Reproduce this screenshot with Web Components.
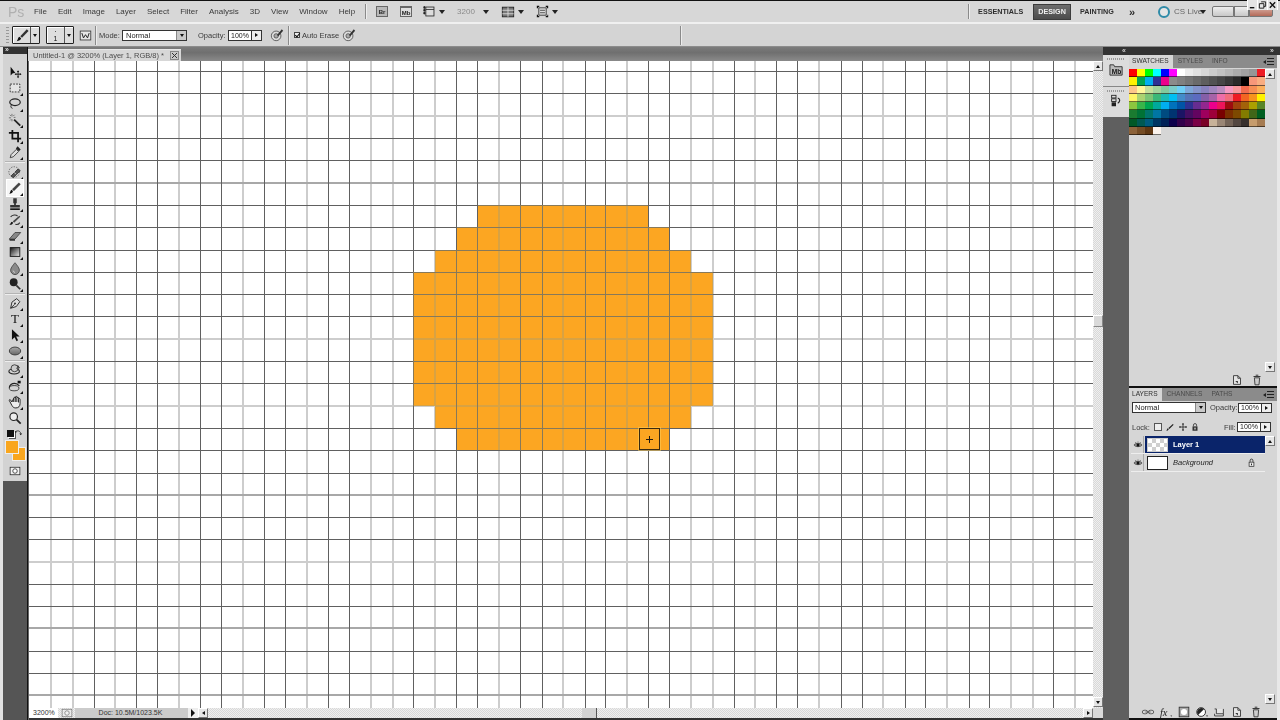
<!DOCTYPE html>
<html>
<head>
<meta charset="utf-8">
<title>Photoshop</title>
<style>
    html, body { margin: 0; height: 100%; overflow: hidden; background: #d6d6d6; }
    body { font: 8px "Liberation Sans", Arial, sans-serif; color: #333; }
    ps-app { width: 1280px; height: 720px; }
</style>
</head>
<body>
<ps-app>
    <ps-menubar></ps-menubar>
    <ps-options></ps-options>
    <ps-workspace>
        <ps-toolbox></ps-toolbox>
        <ps-document></ps-document>
        <ps-side>
            <ps-dock></ps-dock>
            <ps-panels>
                <ps-panel tabs="SWATCHES,STYLES,INFO" style="height:333px">
                    <ps-swatches></ps-swatches>
                    <ps-icon slot="footer" name="newgroup" style="margin-left:101px"></ps-icon>
                    <ps-icon slot="footer" name="trash" style="margin-left:6px"></ps-icon>
                </ps-panel>
                <ps-panel tabs="LAYERS,CHANNELS,PATHS" style="flex:1">
                    <ps-layers></ps-layers>
                    <ps-icon slot="footer" name="link" style="margin-left:12px"></ps-icon>
                    <ps-icon slot="footer" name="fx" style="margin-left:4px"></ps-icon>
                    <ps-icon slot="footer" name="mask" style="margin-left:4px"></ps-icon>
                    <ps-icon slot="footer" name="adjust" style="margin-left:4px"></ps-icon>
                    <ps-icon slot="footer" name="folder" style="margin-left:3px"></ps-icon>
                    <ps-icon slot="footer" name="newgroup" style="margin-left:4px"></ps-icon>
                    <ps-icon slot="footer" name="trash" style="margin-left:5px"></ps-icon>
                </ps-panel>
            </ps-panels>
        </ps-side>
    </ps-workspace>
</ps-app>

<script>
const ICONS = {
    move: '<path d="M3 2v10l2.5-2.5L8.5 9z" fill="#111"/><path d="M11.5 7v7M8.5 10.5h6" stroke="#111" fill="none"/><path d="M10.2 8l1.3-2 1.3 2zM10.2 13l1.3 2 1.3-2zM9.5 9.2l-2 1.3 2 1.3zM13.5 9.2l2 1.3-2 1.3z" fill="#111"/>',
    marquee: '<rect x="2.5" y="3.5" width="11" height="9" fill="#e4e4e4" stroke="#222" stroke-dasharray="2 1.4"/>',
    lasso: '<ellipse cx="8" cy="6" rx="6" ry="3.8" fill="none" stroke="#222" stroke-width="1.4"/><path d="M4 9c-1.4 1.5-.8 3.6 1.2 4" fill="none" stroke="#222"/>',
    wand: '<path d="M14 14.5L7 7.5" stroke="#222" stroke-width="2"/><path d="M4.5 1v3M4.5 7v2.5M1 5.5h2.5M6.5 5h2M7.5 2L6 3.5M2 2l1.3 1.3M2.3 8.5L3.5 7.3" stroke="#666"/>',
    crop: '<path d="M5 1v10h10M1 4.5h10.5V15" fill="none" stroke="#111" stroke-width="2"/>',
    eyedropper: '<path d="M2.5 14.5l1-3.5 6-6 2.5 2.5-6 6z" fill="#ddd" stroke="#333"/><path d="M9 4l2-2.5 3.5 3.5-2 2z" fill="#222"/>',
    healing: '<circle cx="7" cy="8" r="6" fill="none" stroke="#555" stroke-dasharray="1.5 1.5"/><path d="M3.5 12.5l8-8 2.5 2-8 8z" fill="#555" stroke="#333"/><path d="M7 8.5l2.3 2" stroke="#ccc"/>',
    brush: '<path d="M1.5 14.5c2.5 0 3.8-1 4.2-3L4 10c-1.5.7-1.2 3.3-2.5 4.5z" fill="#111"/><path d="M5 9.5L12.3 2.2l1.8 1.6L6.8 11z" fill="#444" stroke="#222" stroke-width=".6"/>',
    stamp: '<path d="M6 1.5h4V7H9v2h4.5v3h-11V9H7V7H6z" fill="#333"/><path d="M2.5 13h11v1.8h-11z" fill="#111"/>',
    history: '<path d="M1.5 13.5c2.5.3 4-.8 4.4-2.4L4.5 10c-1.6.7-1.4 2.5-3 3.5z" fill="#111"/><path d="M5.5 9.5L13 3l1 1.3L7 11z" fill="#444"/><path d="M3 4.5c2-2.5 6-3 8-1M8.5 13c2 .5 4-.3 5-2" fill="none" stroke="#333" stroke-width="1.2"/>',
    eraser: '<path d="M1.5 11.5L8 4h6.5L8 11.5z" fill="#888" stroke="#444"/><path d="M1.5 11.5H8v1.8H2z" fill="#333"/>',
    gradient: '<defs><linearGradient id="g" x1="0" x2="1" y1="0" y2="1"><stop offset="0" stop-color="#111"/><stop offset="1" stop-color="#eee"/></linearGradient></defs><rect x="2.5" y="3" width="11" height="10" fill="url(#g)" stroke="#111"/>',
    drop: '<path d="M8 2s-5 5.5-5 8.5a5 5 0 0 0 10 0C13 7.5 8 2 8 2z" fill="#8a8a8a" stroke="#444"/><path d="M6 11c0 1 .8 1.8 2 2" stroke="#ddd" fill="none"/>',
    burn: '<circle cx="6.5" cy="6" r="4.5" fill="#222"/><path d="M9.5 9.5l4.5 4.5" stroke="#333" stroke-width="2"/>',
    pen: '<path d="M3 14l1.5-7L10 3l3.5 3.5L9.5 12z" fill="#ddd" stroke="#222"/><path d="M3 14l4.5-4.5" stroke="#222"/><circle cx="8" cy="8.5" r="1" fill="#222"/>',
    type: '<text x="8" y="13" text-anchor="middle" font-family="Liberation Serif" font-size="15" fill="#111">T</text>',
    pointer: '<path d="M4.5 1.5v12l3-3 2.3 4.5 1.7-1-2.200-4.200h4z" fill="#111"/>',
    ellipse: '<defs><linearGradient id="e" x1="0" x2="0" y1="0" y2="1"><stop offset="0" stop-color="#aaa"/><stop offset="1" stop-color="#666"/></linearGradient></defs><ellipse cx="8" cy="8" rx="6.5" ry="4.5" fill="url(#e)" stroke="#333"/>',
    orbit: '<ellipse cx="7" cy="9.5" rx="6" ry="3" fill="none" stroke="#222" stroke-width="1.2"/><circle cx="7.5" cy="6" r="4" fill="#ccc" stroke="#333"/><path d="M11 2.5l2 3-3.5.5" fill="none" stroke="#222"/>',
    orbit2: '<path d="M1.5 10c0-3 3-5 6-5 2.5 0 4 1 5.5 3" fill="none" stroke="#222" stroke-width="1.4"/><ellipse cx="7" cy="10.5" rx="5.5" ry="3" fill="none" stroke="#333"/><path d="M11 2h3.5v3H11z" fill="#111"/>',
    hand: '<path d="M4.5 8L2.800 5.500c-.8-.8-1.800.2-1.200 1L4.500 12c1 2 2.500 2.800 4.500 2.800 3 0 4.800-2 4.800-5V5c0-1.300-1.600-1.300-1.700 0V3.500c0-1.300-1.800-1.300-1.800 0V2.500c0-1.300-1.800-1.300-1.800 0v1c0-1.200-1.800-1.200-1.800 0z" fill="#eee" stroke="#111"/><path d="M6.500 4v4M8.300 3v5M10.100 3.500V8M12 5v3.500" stroke="#111" fill="none"/>',
    zoom: '<circle cx="6.5" cy="6.5" r="4.3" fill="#eee" stroke="#222" stroke-width="1.3"/><path d="M9.800 9.800l4.700 4.700" stroke="#222" stroke-width="2"/>',
    pencil: '<path d="M2 15c2.800 0 4.500-1.200 5-3.200L5 10c-2 .8-1.500 3.500-3 5z" fill="#111"/><path d="M6 9.500L13.500 1.500l2 2L8 11z" fill="#333"/>',
    brushpanel: '<rect x="1.5" y="2.5" width="13" height="11" fill="#e6e6e6" stroke="#333"/><path d="M3.5 5l2 6 2.500-4 2.500 4 2-6" fill="none" stroke="#222" stroke-width="1.2"/>',
    airbrush: '<circle cx="7" cy="9" r="5.5" fill="#ddd" stroke="#555"/><circle cx="7" cy="9" r="2.5" fill="#aaa" stroke="#555"/><path d="M8 8l5.500-6.500 1.500 1.500L9.500 9.500z" fill="#333"/>',
    layout: '<rect x="3.5" y="2.5" width="10" height="11" fill="#ddd" stroke="#222"/><path d="M1 2h1.500v2H1zM1 5.500h1.500v2H1zM1 9h1.500v2H1zM3.500 5.500h10" stroke="#222" fill="#222"/>',
    arrange: '<rect x="1.5" y="2.5" width="13" height="11" fill="#777" stroke="#222"/><path d="M8 2.500v11M1.500 6h13M1.500 10h13" stroke="#ddd"/>',
    screen: '<rect x="3.5" y="3.5" width="9" height="9" fill="#ddd" stroke="#222"/><path d="M1 1h3v1.500H2.500V4H1zM12 1h3v3h-1.500V2.500H12zM1 12h1.500v1.500H4V15H1zM14 12h1v3h-3v-1.500h2z" fill="#111"/><path d="M5 6.500h6M5 9.500h6" stroke="#333"/>',
    newgroup: '<path d="M4 3h5l3 3v7H4z" fill="#e4e4e4" stroke="#333"/><path d="M9 3v3h3" fill="none" stroke="#333"/><path d="M6 9h3v3" fill="#333"/>',
    trash: '<path d="M5 5.500h6l-.7 8H5.700z" fill="#ccc" stroke="#333"/><path d="M4 4h8M6.500 2.500h3" stroke="#222"/>',
    link: '<rect x="1.5" y="6" width="6" height="4" rx="2" fill="none" stroke="#555"/><rect x="8.5" y="6" width="6" height="4" rx="2" fill="none" stroke="#555"/><path d="M5 8h6" stroke="#555"/>',
    fx: '<text x="1" y="12" font-family="Liberation Serif" font-style="italic" font-size="12" fill="#222">fx</text><path d="M13 12l2 0-1 1.500z" fill="#222"/>',
    mask: '<rect x="2.5" y="2.5" width="11" height="11" fill="#aaa" stroke="#333"/><circle cx="8" cy="8" r="3.5" fill="#fff"/>',
    adjust: '<circle cx="7" cy="8" r="5" fill="#fff" stroke="#222"/><path d="M3.500 11.500a5 5 0 0 1 7-7z" fill="#222"/><path d="M12.500 12l2.500 0-1.200 1.500z" fill="#222"/>',
    folder: '<path d="M3 4.500h2v5.500h8V4.500M3 10v2.500h10V10" fill="#e4e4e4" stroke="#333"/>',
    lock: '<rect x="4" y="7" width="8" height="7" fill="#333"/><path d="M5.500 7V5a2.500 2.500 0 0 1 5 0v2" fill="none" stroke="#333" stroke-width="1.3"/><rect x="7" y="9" width="2" height="3" fill="#ddd"/>',
    lockwhite: '<rect x="4.5" y="7.5" width="7" height="6" fill="#eee" stroke="#222"/><path d="M6 7V5a2 2 0 0 1 4 0v2" fill="none" stroke="#222" stroke-width="1.2"/><rect x="7.3" y="9.5" width="1.4" height="2.5" fill="#222"/>',
    lockpixels: '<path d="M2 14c2.500 0 3.500-1 4-2.800L4.500 10C3 10.800 3.300 13 2 14zM5.500 9.500L12.500 3l1.300 1.300L7 11z" fill="#222"/>',
    cross: '<path d="M8 2v12M2 8h12" stroke="#222" stroke-width="1.3"/><path d="M6.300 4L8 1.500 9.700 4zM6.300 12L8 14.500 9.700 12zM4 6.300L1.500 8 4 9.700zM12 6.300L14.500 8 12 9.700z" fill="#222"/>',
    eye: '<path d="M1.500 8c2-3.500 11-3.500 13 0-2 3.500-11 3.500-13 0z" fill="#999" stroke="#222"/><circle cx="8" cy="8" r="2.4" fill="#111"/><path d="M4 3.500l1 1.500M8 2.500V4M12 3.500l-1 1.500" stroke="#222"/>',
    swap: '<path d="M3 5c3-3 8-2 9 3" fill="none" stroke="#111" stroke-width="1.3"/><path d="M1 5l3-2v4zM9.500 8h5L12 11z" fill="#111"/>',
    quickmask: '<rect x="1.5" y="3" width="13" height="10" fill="#f2f2f2" stroke="#222"/><circle cx="8" cy="8" r="3" fill="#fff" stroke="#222"/>',
    mb: '<path d="M1 3h4l1 2h8v9H1z" fill="#bbb" stroke="#333"/><text x="8" y="12.5" text-anchor="middle" font-family="Liberation Sans" font-weight="700" font-size="7" fill="#111">Mb</text>',
    actions: '<rect x="3" y="1.5" width="5" height="3" fill="none" stroke="#222"/><rect x="3" y="5.5" width="5" height="3" fill="none" stroke="#222"/><rect x="3" y="9.5" width="5" height="4.5" fill="#222"/><path d="M10 4.500c3 .8 3 4.500 0 6" fill="none" stroke="#222" stroke-width="1.3"/>'
};

// small helper so the plain elements don't each repeat the same constructor
function define(name, css, html) {
    customElements.define(name, class extends HTMLElement {
        constructor() {
            super();
            this.attachShadow({ mode: 'open' }).innerHTML = `<style>${css}</style>${html}`;
        }
    });
}

class PsIcon extends HTMLElement {
    constructor() {
        super();
        this.attachShadow({ mode: 'open' });
    }

    connectedCallback() {
        const size = this.getAttribute('size') || 14;
        this.shadowRoot.innerHTML = `
        <style>
            :host { display: inline-flex; flex: none; width: ${size}px; height: ${size}px; }
            svg { width: 100%; height: 100%; display: block; }
        </style>
        <svg viewBox="0 0 16 16">${ICONS[this.getAttribute('name')] || ''}</svg>`;
    }
}
customElements.define('ps-icon', PsIcon);

class PsTool extends HTMLElement {
    constructor() {
        super();
        this.attachShadow({ mode: 'open' });
    }

    connectedCallback() {
        this.shadowRoot.innerHTML = `
        <style>
            :host { display: flex; justify-content: center; align-items: center; height: 16px; flex: none; }
            .cell { width: 16px; height: 16px; display: flex; align-items: center; justify-content: center; position: relative; }
            :host([selected]) .cell { background: #f6f6f6; box-shadow: 0 0 0 1px #fff; }
            :host(:not([plain])) .cell::after {
                content: ""; position: absolute; right: 0; bottom: 0;
                border-right: 3px solid #111; border-top: 3px solid transparent;
            }
        </style>
        <div class="cell"><ps-icon name="${this.getAttribute('name')}" size="14"></ps-icon></div>`;
    }
}
customElements.define('ps-tool', PsTool);

define('ps-app', `
    :host { display: flex; flex-direction: column; overflow: hidden; position: relative; }
`, `<slot></slot>`);

define('ps-workspace', `
    :host { display: flex; flex: 1; min-height: 0; }
`, `<slot></slot>`);

define('ps-menubar', `
    :host {
        display: flex; align-items: center; height: 24px; flex: none; box-sizing: border-box; position: relative;
        background: #d7d7d7; border-top: 1px solid #efefef; border-bottom: 2px solid;
        border-image: linear-gradient(#111 50%, #f0f0f0 50%) 1; font-size: 8px; color: #3a3a3a; filter: blur(.3px);
    }
    .logo { font: 400 14px "Liberation Sans", sans-serif; color: #b0b0b0; margin-left: 8px; width: 26px; flex: none; }
    nav { display: flex; gap: 11px; flex: none; }
    .sep { width: 1px; height: 15px; background: #8a8a8a; box-shadow: 1px 0 #eee; flex: none; }
    .bridge { font: 700 6px "Liberation Sans", sans-serif; width: 12px; height: 11px; line-height: 11px; text-align: center;
        background: #b8b8b8; border: 1px solid #666; box-sizing: border-box; flex: none; margin-left: 10px; color: #222; }
    .mini { margin-left: 12px; background: #ddd; border-top: 2px solid #666; }
    .dd { width: 0; height: 0; border: 3px solid transparent; border-top: 4px solid #222; border-bottom: 0; flex: none; margin-left: 3px; }
    .zoom { color: #8b8b8b; margin-left: 12px; width: 22px; font-size: 8px; flex: none; }
    .ws { font: 700 7.2px "Liberation Sans", sans-serif; color: #2d2d2d; flex: none; white-space: nowrap; }
    .ws.on { background: linear-gradient(#6d6d6d, #4c4c4c); border: 1px solid #3c3c3c; color: #f0f0f0; height: 16px; line-height: 14px;
        width: 38px; text-align: center; box-sizing: border-box; margin: 0 9px; }
    .live { width: 8px; height: 8px; border: 2px solid #2f8ba8; border-radius: 50%; background: #e5e5e5; flex: none; margin-left: 20px; }
    .livetext { color: #666; margin-left: 4px; font-size: 8px; flex: none; width: 25px; white-space: nowrap; }
    .winbox { display: flex; margin-left: 6px; height: 11px; flex: none; }
    .winbox i { display: block; box-sizing: border-box; border: 1px solid #777; background: linear-gradient(#eee, #c8c8c8); }
    .winbox i:nth-child(1) { width: 22px; border-radius: 2px 0 0 2px; }
    .winbox i:nth-child(2) { width: 15px; }
    .winbox i:nth-child(3) { width: 24px; background: linear-gradient(#d9b2a8, #b56a58); border-radius: 0 2px 2px 0; }
    .chrome { position: absolute; left: 1247px; top: -1px; display: flex; gap: 1px; height: 10px; background: #fff; padding: 0 1px; }
    .chrome svg { width: 9px; height: 10px; display: block; background: #e4e4e4; }
`, `
    <span class="logo">Ps</span>
    <nav>
        <span>File</span><span>Edit</span><span>Image</span><span>Layer</span><span>Select</span><span>Filter</span>
        <span>Analysis</span><span>3D</span><span>View</span><span>Window</span><span>Help</span>
    </nav>
    <span class="sep" style="margin-left:10px"></span>
    <span class="bridge">Br</span>
    <span class="bridge mini">Mb</span>
    <ps-icon name="layout" size="13" style="margin-left:11px"></ps-icon><span class="dd"></span>
    <span class="zoom">3200</span><span class="dd" style="margin-left:4px"></span>
    <ps-icon name="arrange" size="14" style="margin-left:12px"></ps-icon><span class="dd"></span>
    <ps-icon name="screen" size="13" style="margin-left:12px"></ps-icon><span class="dd"></span>
    <span class="sep" style="margin-left:410px"></span>
    <span class="ws" style="margin-left:9px;width:46px">ESSENTIALS</span>
    <span class="ws on">DESIGN</span>
    <span class="ws" style="width:37px">PAINTING</span>
    <span class="ws" style="margin-left:12px;font-size:11px;letter-spacing:-1px;width:9px">»</span>
    <span class="live"></span>
    <span class="livetext">CS Live</span><span class="dd" style="margin-left:1px"></span>
    <span class="winbox"><i></i><i></i><i></i></span>
    <div class="chrome">
        <svg viewBox="0 0 10 10"><path d="M2 8h5" stroke="#111" stroke-width="1.5"/></svg>
        <svg viewBox="0 0 10 10"><path d="M3.500 1.500h5v5h-2M1.500 3.500h5v5h-5z" fill="none" stroke="#111"/></svg>
        <svg viewBox="0 0 10 10"><path d="M2 2l6 6M8 2l-6 6" stroke="#111" stroke-width="1.5"/></svg>
    </div>
`);

define('ps-options', `
    :host {
        display: flex; align-items: center; height: 23px; flex: none; box-sizing: border-box;
        background: #d4d4d4; border-bottom: 1px solid #8c8c8c; font-size: 7.5px; color: #3a3a3a; filter: blur(.3px);
    }
    .grip { width: 3px; height: 16px; margin-left: 6px; flex: none; background: repeating-linear-gradient(#999 0 1px, transparent 1px 3px); }
    .preset { display: flex; align-items: center; height: 18px; box-sizing: border-box; border: 1px solid #222; border-radius: 1px;
        background: #dedede; flex: none; box-shadow: inset 1px 1px #fff; }
    .caret { width: 0; height: 0; border: 2.5px solid transparent; border-top: 3px solid #111; border-bottom: 0; }
    .cell { display: flex; width: 9px; height: 100%; align-items: center; justify-content: center; border-left: 1px solid #555; box-sizing: border-box; }
    .tip { flex: 1; text-align: center; font-size: 7px; line-height: 7px; color: #111; }
    .sep { width: 1px; height: 19px; background: #8a8a8a; box-shadow: 1px 0 #ececec; flex: none; }
    .field { background: #fff; border: 1px solid #333; box-sizing: border-box; height: 11px; line-height: 9px; padding-left: 2px; flex: none; color: #222; }
    .sel { display: flex; justify-content: space-between; width: 65px; padding-left: 3px; font-size: 7.5px; }
    .sel b { display: flex; align-items: center; justify-content: center; width: 9px; background: #c9c9c9; border-left: 1px solid #888; }
    .arrow { width: 10px; height: 11px; box-sizing: border-box; border: 1px solid #333; border-left: 0; background: #eee; display: flex; align-items: center; justify-content: center; flex: none; }
    .arrow::after { content: ""; border-left: 3px solid #111; border-top: 2px solid transparent; border-bottom: 2px solid transparent; }
    .check { width: 6px; height: 6px; border: 1px solid #444; background: #eee; box-sizing: border-box; flex: none; position: relative; }
    .check::after { content: ""; position: absolute; left: 1px; top: -1px; width: 2px; height: 4px; border: solid #111; border-width: 0 1px 1px 0; transform: rotate(40deg); }
    span { flex: none; }
`, `
    <i class="grip"></i>
    <div class="preset" style="margin-left:3px;width:28px">
        <span style="flex:1;display:flex;justify-content:center"><ps-icon name="pencil" size="14"></ps-icon></span>
        <span class="cell"><i class="caret"></i></span>
    </div>
    <div class="preset" style="margin-left:6px;width:28px">
        <span class="tip">·<br>1</span>
        <span class="cell"><i class="caret"></i></span>
    </div>
    <ps-icon name="brushpanel" size="13" style="margin-left:5px"></ps-icon>
    <span class="sep" style="margin-left:3px"></span>
    <span style="margin-left:3px;width:23px">Mode:</span>
    <div class="field sel"><span>Normal</span><b><i class="caret"></i></b></div>
    <span style="margin-left:11px;width:30px">Opacity:</span>
    <span class="field" style="width:24px;font-size:7px">100%</span><i class="arrow"></i>
    <ps-icon name="airbrush" size="14" style="margin-left:8px"></ps-icon>
    <span class="sep" style="margin-left:4px"></span>
    <i class="check" style="margin-left:5px"></i>
    <span style="margin-left:2px;width:40px">Auto Erase</span>
    <ps-icon name="airbrush" size="14"></ps-icon>
    <span class="sep" style="margin-left:324px"></span>
`);

define('ps-toolbox', `
    :host {
        display: flex; flex-direction: column; width: 28px; flex: none; box-sizing: border-box;
        border-left: 3px solid #e2e2e2; border-right: 1px solid #111; background: #555; filter: blur(.3px);
    }
    .head { height: 7px; background: #333; color: #ddd; font: 700 7px/6px "Liberation Sans", sans-serif; padding-left: 2px; letter-spacing: -1px; }
    .body { background: #d3d3d3; height: 427px; display: flex; flex-direction: column; padding-top: 10px; box-sizing: border-box; }
    .rule { height: 4px; flex: none; position: relative; }
    .rule::after { content: ""; position: absolute; left: 2px; right: 2px; top: 1px; height: 1px; background: #b4b4b4; box-shadow: 0 1px #eee; }
    .swap { display: flex; justify-content: space-between; align-items: center; padding: 0 4px; height: 15px; flex: none; }
    .defaults { width: 7px; height: 7px; background: #111; box-shadow: 1px 1px 0 #fff, 2px 2px 0 #555; }
    .colors { position: relative; height: 22px; flex: none; }
    .fg, .bg { position: absolute; width: 12px; height: 12px; background: #f9a61e; box-shadow: 0 0 0 1px #eee; }
    .fg { left: 3px; top: 0; z-index: 1; }
    .bg { left: 10px; top: 7px; }
    ps-icon.mask { margin: 2px auto 0; }
`, `
    <div class="head">»</div>
    <div class="body">
        <ps-tool name="move" plain></ps-tool>
        <ps-tool name="marquee"></ps-tool>
        <ps-tool name="lasso"></ps-tool>
        <ps-tool name="wand"></ps-tool>
        <ps-tool name="crop"></ps-tool>
        <ps-tool name="eyedropper"></ps-tool>
        <div class="rule"></div>
        <ps-tool name="healing"></ps-tool>
        <ps-tool name="brush" selected></ps-tool>
        <ps-tool name="stamp"></ps-tool>
        <ps-tool name="history"></ps-tool>
        <ps-tool name="eraser"></ps-tool>
        <ps-tool name="gradient"></ps-tool>
        <ps-tool name="drop"></ps-tool>
        <ps-tool name="burn"></ps-tool>
        <div class="rule" style="height:3px"></div>
        <ps-tool name="pen"></ps-tool>
        <ps-tool name="type"></ps-tool>
        <ps-tool name="pointer"></ps-tool>
        <ps-tool name="ellipse"></ps-tool>
        <div class="rule" style="height:3px"></div>
        <ps-tool name="orbit"></ps-tool>
        <ps-tool name="orbit2"></ps-tool>
        <ps-tool name="hand"></ps-tool>
        <ps-tool name="zoom" plain></ps-tool>
        <div class="swap"><i class="defaults"></i><ps-icon name="swap" size="9"></ps-icon></div>
        <div class="colors"><i class="bg"></i><i class="fg"></i></div>
        <ps-icon class="mask" name="quickmask" size="12"></ps-icon>
    </div>
`);

define('ps-document', `
    :host { display: flex; flex-direction: column; width: 1075px; flex: none; background: #333; box-sizing: border-box; border-left: 1px solid #666; }
    .tabs { height: 14px; flex: none; background: linear-gradient(#7c7c7c, #6f6f6f 40%, #8a8a8a); display: flex; align-items: flex-end; margin-left: -1px; }
    .tab { display: flex; align-items: center; height: 12px; width: 153px; background: #d7d7d7; color: #4b4b4b; font-size: 7.5px; padding-left: 5px; box-sizing: border-box; border-top: 1px solid #e8e8e8; filter: blur(.3px); }
    .tab span { width: 137px; white-space: nowrap; }
    .close { width: 9px; height: 9px; box-sizing: border-box; border: 1px solid #888; background: #c8c8c8; display: block; }
    .close svg { display: block; width: 100%; height: 100%; }
    .view { display: flex; flex: none; height: 647px; }
`, `
    <div class="tabs">
        <div class="tab"><span>Untitled-1 @ 3200% (Layer 1, RGB/8) *</span>
            <i class="close"><svg viewBox="0 0 7 7"><path d="M1 1l5 5M6 1l-5 5" stroke="#333"/></svg></i>
        </div>
    </div>
    <div class="view">
        <ps-canvas></ps-canvas>
        <ps-vscroll top="244" thumb="12"></ps-vscroll>
    </div>
    <ps-statusbar></ps-statusbar>
`);

class PsCanvas extends HTMLElement {
    constructor() {
        super();
        const shadowRoot = this.attachShadow({ mode: 'open' });
        // grid is scaled down from 32x so the lines land unevenly, hence the explicit lists
        const vertical = {
            d: [94, 136, 157, 200, 221, 264, 285, 328, 349, 413, 456, 477, 520, 542, 585, 605, 648, 669, 734, 776, 797, 841, 862, 905, 925, 969, 989, 1053],
            l: [51, 73, 115, 179, 243, 307, 371, 393, 435, 499, 563, 627, 691, 713, 755, 819, 883, 947, 1011, 1033, 1075]
        };
        const horizontal = {
            d: [71, 93, 138, 160, 205, 227, 250, 272, 294, 316, 361, 383, 428, 450, 473, 517, 539, 584, 606, 651, 673],
            m: [183, 495, 628, 695],
            l: [116, 339, 406, 562]
        };
        const rows = [
            [205, 227, 478, 648], [227, 250, 457, 669], [250, 272, 435, 691], [272, 406, 413, 713],
            [406, 428, 435, 691], [428, 450, 457, 669]
        ];
        const rect = (x, y, w, h, fill) => `<rect x="${x}" y="${y}" width="${w}" height="${h}" fill="${fill}"/>`;
        const lines = (dark, mid, light) => [
            ...vertical.l.map(x => rect(x - 1, 61, 2, 647, light)),
            ...horizontal.l.map(y => rect(29, y - 1, 1064, 2, light)),
            ...horizontal.m.map(y => rect(29, y - 1, 1064, 2, mid)),
            ...vertical.d.map(x => rect(x, 61, 1, 647, dark)),
            ...horizontal.d.map(y => rect(29, y, 1064, 1, dark))
        ].join('');
        const orange = rows.map(([y1, y2, x1, x2]) => rect(x1, y1, x2 - x1, y2 - y1, '#fca622')).join('');
        const clip = rows.map(([y1, y2, x1, x2]) => `<rect x="${x1}" y="${y1}" width="${x2 - x1}" height="${y2 - y1}"/>`).join('');
        shadowRoot.innerHTML = `
        <style>
            :host { display: block; width: 1064px; height: 647px; flex: none; background: #fff; }
            svg { display: block; }
        </style>
        <svg width="1064" height="647" viewBox="29 61 1064 647" shape-rendering="crispEdges">
            <defs><clipPath id="paint">${clip}</clipPath></defs>
            ${lines('#606060', '#a8a8a8', '#cdcdcd')}
            ${orange}
            <g clip-path="url(#paint)">${lines('#87795a', '#c0a060', '#d8a243')}</g>
            <rect x="639.5" y="428.5" width="20" height="21" fill="#fca622" stroke="#3a2a10"/>
            <rect x="638.5" y="427.5" width="22" height="23" fill="none" stroke="#ffd05a" stroke-opacity=".5"/>
            <path d="M649 436v7M645.500 439.500h7" stroke="#221a10"/>
        </svg>`;
    }
}
customElements.define('ps-canvas', PsCanvas);

class PsVscroll extends HTMLElement {
    constructor() {
        super();
        this.attachShadow({ mode: 'open' });
    }

    connectedCallback() {
        const top = this.getAttribute('top');
        const thumb = top ? `<i class="thumb" style="margin-top:${top}px;height:${this.getAttribute('thumb')}px"></i>` : '';
        this.shadowRoot.innerHTML = `
        <style>
            :host {
                display: flex; flex-direction: column; width: 10px; flex: none;
                background: var(--track, repeating-conic-gradient(#d8d8d8 0 25%, #efefef 0 50%) 0 0 / 2px 2px);
            }
            i { display: block; flex: none; box-sizing: border-box; }
            .btn { height: 10px; background: #e6e6e6; border: 1px solid #777; border-top-color: #fff; border-left-color: #fff; position: relative; }
            .btn::after { content: ""; position: absolute; left: 2px; top: 3px; border: 2.5px solid transparent; border-top: 0; border-bottom: 3px solid #111; }
            .down::after { border-bottom: 0; border-top: 3px solid #111; }
            .thumb { background: #d9d9d9; border: 1px solid #888; border-top-color: #fff; border-left-color: #fff; }
            .fill { flex: 1; }
        </style>
        <i class="btn"></i>${thumb}<i class="fill"></i><i class="btn down"></i><i style="height:1px"></i>`;
    }
}
customElements.define('ps-vscroll', PsVscroll);

define('ps-statusbar', `
    :host { display: flex; align-items: center; height: 10px; flex: none; box-sizing: border-box; font-size: 7px; color: #333;
        background: repeating-conic-gradient(#d8d8d8 0 25%, #efefef 0 50%) 0 0 / 2px 2px; }
    .zoom { width: 29px; height: 10px; line-height: 10px; background: #fff; padding-left: 4px; box-sizing: border-box; flex: none; font-size: 7px; }
    .info { width: 113px; height: 10px; line-height: 10px; background: #cbcbcb; text-align: center; flex: none; padding-right: 2px; box-sizing: border-box; }
    .run { width: 10px; height: 10px; flex: none; display: flex; align-items: center; justify-content: center; background: #eee; }
    .run::after { content: ""; border-left: 4px solid #111; border-top: 4px solid transparent; border-bottom: 4px solid transparent; }
    .btn { width: 10px; height: 10px; box-sizing: border-box; background: #e6e6e6; border: 1px solid #777; border-top-color: #fff; border-left-color: #fff; flex: none; display: flex; align-items: center; justify-content: center; }
    .btn::after { content: ""; border-right: 3px solid #111; border-top: 2.5px solid transparent; border-bottom: 2.5px solid transparent; }
    .btn.r::after { border-right: 0; border-left: 3px solid #111; }
    .thumb { width: 15px; height: 10px; background: #d2d2d2; box-sizing: border-box; border-right: 1px solid #555; flex: none; margin-left: 374px; }
    .fill { flex: 1; }
    .corner { width: 10px; height: 10px; background: #d9d9d9; flex: none; }
`, `
    <span class="zoom">3200%</span>
    <ps-icon name="quickmask" size="12" style="margin:0 2px 0 3px;opacity:.55"></ps-icon>
    <span class="info">Doc: 10.5M/1023.5K</span>
    <i class="run"></i>
    <i class="btn"></i>
    <i class="thumb"></i>
    <i class="fill"></i>
    <i class="btn r"></i>
    <i class="corner"></i>
`);

define('ps-side', `
    :host { display: flex; flex-wrap: wrap; align-content: flex-start; width: 177px; flex: none; background: #5f5f5f; position: relative; filter: blur(.25px); }
    .head { width: 100%; height: 8px; background: #333; display: flex; justify-content: space-between; color: #ccc; font: 700 7px/7px "Liberation Sans", sans-serif; padding: 0 7px 0 19px; box-sizing: border-box; letter-spacing: -1px; }
    .row { display: flex; width: 100%; height: 665px; }
`, `
    <div class="head"><span>«</span><span>»</span></div>
    <div class="row"><slot></slot></div>
`);

define('ps-dock', `
    :host { display: flex; flex-direction: column; width: 26px; flex: none; }
    .group { background: #dcdcdc; display: flex; flex-direction: column; align-items: center; box-sizing: border-box; height: 31px; }
    .group + .group { border-top: 1px solid #888; }
    .group::before { content: ""; width: 18px; height: 2px; margin: 3px 0 2px; background: repeating-linear-gradient(90deg, #999 0 1px, transparent 1px 2px); }
`, `
    <div class="group"><ps-icon name="mb" size="15"></ps-icon></div>
    <div class="group"><ps-icon name="actions" size="14"></ps-icon></div>
`);

define('ps-panels', `
    :host { display: flex; flex-direction: column; width: 151px; flex: none; border-right: 3px solid #e8e8e8; box-sizing: border-box; }
`, `<slot></slot>`);

class PsPanel extends HTMLElement {
    constructor() {
        super();
        this.attachShadow({ mode: 'open' });
    }

    connectedCallback() {
        const tabs = this.getAttribute('tabs').split(',')
            .map((t, i) => `<span class="${i === 0 ? 'tab on' : 'tab'}">${t}</span>`).join('');
        this.shadowRoot.innerHTML = `
        <style>
            :host { display: flex; flex-direction: column; background: #d6d6d6; box-sizing: border-box; flex: none; border-bottom: 2px solid #111; }
            .tabs { display: flex; height: 13px; flex: none; background: #8b8b8b; align-items: flex-start; position: relative; }
            .tab { color: #4a4a4a; font: 400 6.6px/12px "Liberation Sans", sans-serif; height: 12px; padding: 0 4.5px; }
            .tab.on { background: #d6d6d6; color: #2f2f2f; padding-left: 3px; height: 13px; }
            .menu { position: absolute; right: 3px; top: 3px; width: 7px; height: 7px; background: repeating-linear-gradient(#222 0 1px, transparent 1px 3px); }
            .menu::before { content: ""; position: absolute; left: -4px; top: 2px; border-right: 3px solid #222; border-top: 2px solid transparent; border-bottom: 2px solid transparent; }
            .body { flex: 1; min-height: 0; display: flex; }
            footer { display: flex; align-items: center; height: 13px; flex: none; background: #d6d6d6; }
        </style>
        <div class="tabs">${tabs}<i class="menu"></i></div>
        <div class="body"><slot></slot></div>
        <footer><slot name="footer"></slot></footer>`;
    }
}
customElements.define('ps-panel', PsPanel);

class PsSwatches extends HTMLElement {
    constructor() {
        super();
        const shadowRoot = this.attachShadow({ mode: 'open' });
        const colors = `ff0000 ffff00 00ff00 00ffff 0000ff ff00ff ffffff ebebeb e1e1e1 d7d7d7 cccccc c2c2c2 b7b7b7 acacac a1a1a1 969696 ed1c24
            fff200 00a651 00aeef 2e3192 ec008c 8b8b8b 808080 757575 6a6a6a 5e5e5e 525252 464646 383838 2a2a2a 000000 f7977a f9ad81
            fdc68a fff79a c4df9b a2d39c 82ca9d 7bcdc8 6ecff6 7ea7d8 8493ca 8882be a187be bc8dbf f49ac2 f6989d f26c4f f68e55 fbaf5c
            fff467 acd372 7cc576 3bb878 1abbb4 00bff3 438cca 5574b9 5c6bc0 855fa8 a763a8 ee6ea8 f26d7d ed1c24 f26522 f7941d fff200
            8dc63f 39b54a 00a651 00a99d 00aeef 0072bc 0054a6 2e3192 662d91 92278f ec008c ed145b 9e0b0f a0410d a36209 aba000 598527
            1a7b30 007236 00746b 0076a3 004b80 003471 1b1464 440e62 630460 9e005d 9e0039 790000 7b2e00 7d4900 827b00 406618 005e20
            005826 005952 005b7f 003663 002157 0d004c 32004b 4b0049 7b0046 7a0026 c7b299 998675 736357 534741 362f2d c69c6d a67c52
            8c6239 754c24 603813 fbf3ec`.trim().split(/\s+/);
        const cells = colors.map(c => `<i style="background:#${c}"></i>`).join('');
        shadowRoot.innerHTML = `
        <style>
            :host { display: flex; flex: 1; padding-top: 1px; box-sizing: border-box; --track: #d6d6d6; }
            .grid { display: grid; grid-template-columns: repeat(17, 8px); grid-auto-rows: 8.3px; align-content: start; width: 136px; flex: none; }
            i { display: block; box-shadow: inset 0 -1px rgba(0,0,0,.55); }
        </style>
        <div class="grid">${cells}</div>
        <ps-vscroll></ps-vscroll>`;
    }
}
customElements.define('ps-swatches', PsSwatches);

class PsLayer extends HTMLElement {
    constructor() {
        super();
        this.attachShadow({ mode: 'open' });
    }

    connectedCallback() {
        const locked = this.hasAttribute('locked');
        this.shadowRoot.innerHTML = `
        <style>
            :host { display: flex; align-items: center; height: 18px; box-sizing: border-box; border-bottom: 1px solid #eee; color: #222; font-size: 7.5px; }
            .eye { width: 13px; height: 17px; display: flex; align-items: center; justify-content: center; flex: none; margin-right: 1px; box-shadow: inset -1px 0 #aaa; }
            .row { flex: 1; display: flex; align-items: center; height: 17px; padding-left: 2px; position: relative; }
            :host([selected]) .row { background: #0a246a; color: #fff; font-weight: 700; }
            :host([locked]) .name { font-style: italic; }
            .thumb { width: 21px; height: 14px; background: #fff; border: 1px solid #222; box-sizing: border-box; margin-right: 5px; flex: none; }
            :host([selected]) .thumb { background: repeating-conic-gradient(#cfcfcf 0 25%, #fff 0 50%) 0 0 / 8px 8px; border-color: #ccc; }
            ps-icon.lock { position: absolute; right: 8px; }
        </style>
        <span class="eye"><ps-icon name="eye" size="10"></ps-icon></span>
        <div class="row">
            <i class="thumb"></i><span class="name">${this.getAttribute('name')}</span>
            ${locked ? '<ps-icon class="lock" name="lockwhite" size="11"></ps-icon>' : ''}
        </div>`;
    }
}
customElements.define('ps-layer', PsLayer);

define('ps-layers', `
    :host { display: flex; flex-direction: column; flex: 1; font-size: 7.5px; color: #3a3a3a; min-width: 0; --track: #d6d6d6; }
    .line { display: flex; align-items: center; padding-left: 3px; flex: none; }
    .line > * { flex: none; }
    .blend { margin-top: 1px; height: 11px; }
    .lock { margin-top: 9px; height: 10px; }
    .sel { display: flex; justify-content: space-between; width: 74px; height: 11px; background: #fff; border: 1px solid #333; box-sizing: border-box; line-height: 9px; padding-left: 2px; color: #222; }
    .sel b { display: flex; align-items: center; justify-content: center; width: 9px; background: #c9c9c9; border-left: 1px solid #888; }
    .caret { width: 0; height: 0; border: 2.5px solid transparent; border-top: 3px solid #111; border-bottom: 0; }
    .field { width: 24px; height: 10px; box-sizing: border-box; background: #fff; border: 1px solid #333; font-size: 7px; line-height: 8px; padding-left: 2px; color: #222; }
    .arrow { width: 10px; height: 10px; box-sizing: border-box; border: 1px solid #333; border-left: 0; background: #eee; display: flex; align-items: center; justify-content: center; }
    .arrow::after { content: ""; border-left: 3px solid #111; border-top: 2px solid transparent; border-bottom: 2px solid transparent; }
    .box { width: 8px; height: 8px; border: 1px solid #555; box-sizing: border-box; background: #eee; }
    .list { display: flex; flex: 1; margin-top: 4px; min-height: 0; }
    .rows { width: 136px; flex: none; padding-left: 2px; box-sizing: border-box; }
`, `
    <div class="line blend">
        <div class="sel"><span>Normal</span><b><i class="caret"></i></b></div>
        <span style="margin-left:4px;width:28px">Opacity:</span>
        <span class="field">100%</span><i class="arrow"></i>
    </div>
    <div class="line lock">
        <span style="width:22px">Lock:</span>
        <i class="box"></i>
        <ps-icon name="lockpixels" size="10" style="margin-left:3px"></ps-icon>
        <ps-icon name="cross" size="10" style="margin-left:3px"></ps-icon>
        <ps-icon name="lock" size="10" style="margin-left:2px"></ps-icon>
        <span style="margin-left:24px;width:13px">Fill:</span>
        <span class="field">100%</span><i class="arrow"></i>
    </div>
    <div class="list">
        <div class="rows">
            <ps-layer name="Layer 1" selected></ps-layer>
            <ps-layer name="Background" locked></ps-layer>
        </div>
        <ps-vscroll></ps-vscroll>
    </div>
`);
</script>
</body>
</html>
